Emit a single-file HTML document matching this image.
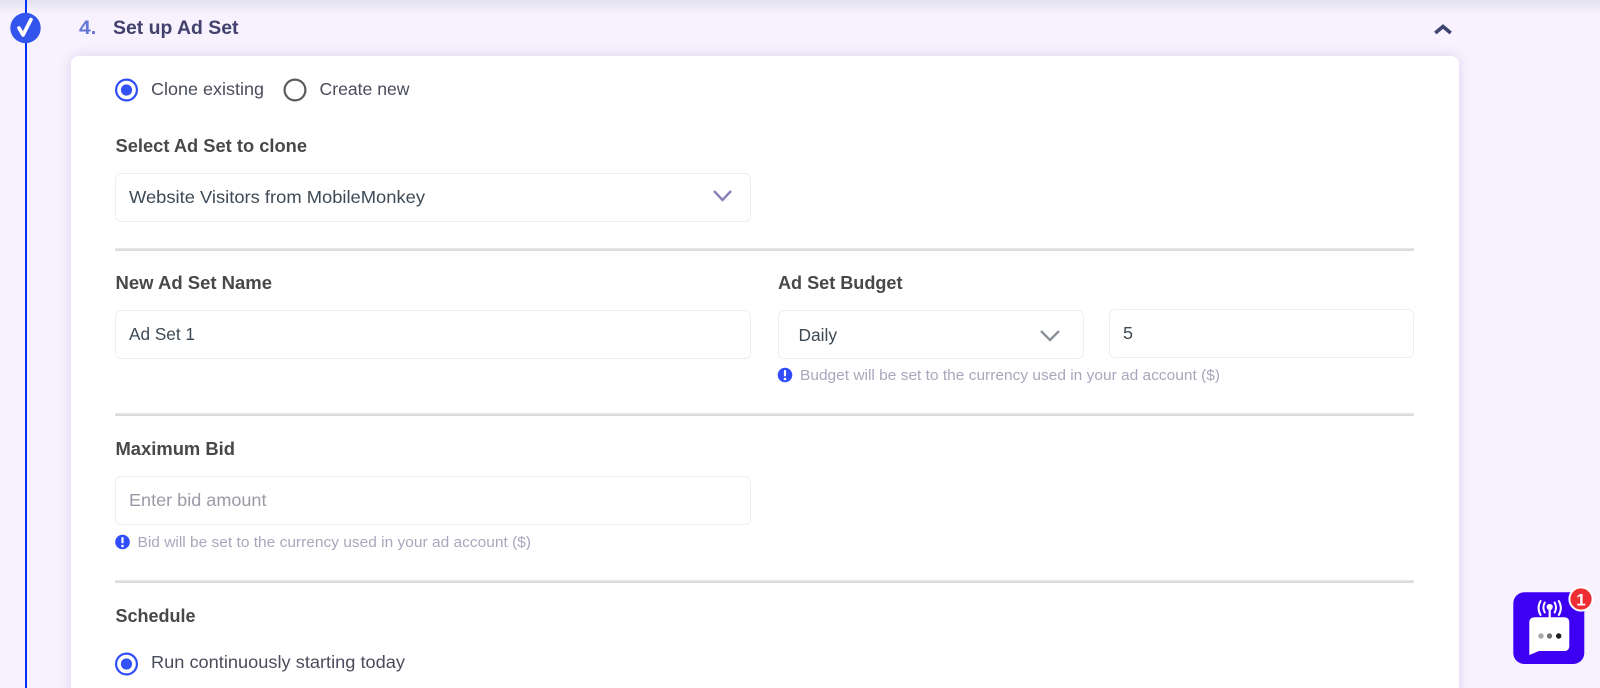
<!DOCTYPE html>
<html lang="en">
<head>
<meta charset="utf-8">
<title>Set up Ad Set</title>
<style>
html,body{margin:0;padding:0;width:1600px;height:688px;overflow:hidden;background:#f7f2fe}
body{position:relative;font-family:"Liberation Sans",sans-serif}
.abs{position:absolute}
.top{left:0;top:0;width:1600px;height:14px;background:linear-gradient(#e3e0ef,#f7f2fe)}
.card{left:71px;top:56px;width:1388px;height:660px;background:#fff;border-radius:8px;box-shadow:0 0 12px rgba(110,90,170,.2)}
.box{box-sizing:border-box;background:#fff;border:1px solid #eeedf3;border-radius:6px}
.div{left:115px;width:1299px;height:3px;background:linear-gradient(#e6e6e6,#d8d8d8);border-radius:1px}
.line{left:25px;top:0;width:2px;height:688px;background:#0033ff}
svg.t{position:absolute;left:0;top:0;width:1600px;height:688px}
text{font-family:"Liberation Sans",sans-serif}
.h{font-size:19.5px;font-weight:700;fill:#41416b}
.l{font-size:18.5px;font-weight:700;fill:#484848}
.v{font-size:17.5px;fill:#3d4a55}
.r{font-size:17.5px;fill:#4a4c5c}
.n{font-size:15px;fill:#a7a7bd}
</style>
</head>
<body>
<div class="abs top"></div>
<div class="abs card"></div>
<div class="abs line"></div>

<div class="abs box" style="left:115px;top:173px;width:636px;height:49px"></div>
<div class="abs div" style="top:248px"></div>
<div class="abs box" style="left:115px;top:310px;width:636px;height:49px"></div>
<div class="abs box" style="left:778px;top:310px;width:306px;height:49px"></div>
<div class="abs box" style="left:1109px;top:309px;width:305px;height:49px"></div>
<div class="abs div" style="top:413px"></div>
<div class="abs box" style="left:115px;top:476px;width:636px;height:49px"></div>
<div class="abs div" style="top:580px"></div>

<svg class="t" viewBox="0 0 1600 688" xmlns="http://www.w3.org/2000/svg">
  <!-- step check -->
  <circle cx="25.5" cy="28" r="15.2" fill="#3454ee"/>
  <path d="M19 28 L23 35 L31 19.5" fill="none" stroke="#fff" stroke-width="3.6" stroke-linecap="round" stroke-linejoin="round"/>

  <text x="79" y="34" class="h" style="fill:#6477d8" textLength="17.5" lengthAdjust="spacingAndGlyphs">4.</text>
  <text x="113" y="34" class="h" textLength="125.5" lengthAdjust="spacingAndGlyphs">Set up Ad Set</text>
  <path d="M1435.3 33 L1443 26.5 L1450.7 33" fill="none" stroke="#3f4470" stroke-width="3.6" stroke-linejoin="miter"/>

  <!-- radios -->
  <circle cx="126.5" cy="90" r="10.4" fill="#fff" stroke="#2f4dfa" stroke-width="2.2"/>
  <circle cx="126.5" cy="90" r="5.6" fill="#3552f5"/>
  <text x="151" y="95" class="r" textLength="113" lengthAdjust="spacingAndGlyphs">Clone existing</text>
  <circle cx="295" cy="90" r="10.4" fill="#fff" stroke="#5b5b5b" stroke-width="2.2"/>
  <text x="319.5" y="95" class="r" textLength="90" lengthAdjust="spacingAndGlyphs">Create new</text>

  <text x="115.5" y="152" class="l" textLength="191.5" lengthAdjust="spacingAndGlyphs">Select Ad Set to clone</text>
  <text x="129" y="203" class="v" textLength="296" lengthAdjust="spacingAndGlyphs">Website Visitors from MobileMonkey</text>
  <path d="M714 191 L722.5 200 L731 191" fill="none" stroke="#8a80b5" stroke-width="2.4"/>

  <text x="115.5" y="289" class="l" textLength="156.5" lengthAdjust="spacingAndGlyphs">New Ad Set Name</text>
  <text x="778" y="289" class="l" textLength="124.5" lengthAdjust="spacingAndGlyphs">Ad Set Budget</text>
  <text x="129" y="340" class="v" textLength="66" lengthAdjust="spacingAndGlyphs">Ad Set 1</text>
  <text x="798.5" y="341" class="v" textLength="38.5" lengthAdjust="spacingAndGlyphs">Daily</text>
  <path d="M1041 331 L1050 340 L1059 331" fill="none" stroke="#8b929c" stroke-width="2.4"/>
  <text x="1123" y="339" class="v" textLength="10" lengthAdjust="spacingAndGlyphs">5</text>

  <circle cx="785" cy="375" r="7.3" fill="#2f4dfa"/>
  <rect x="783.9" y="370" width="2.2" height="6.4" rx="1" fill="#fff"/>
  <circle cx="785" cy="379" r="1.3" fill="#fff"/>
  <text x="800" y="380" class="n" textLength="420" lengthAdjust="spacingAndGlyphs">Budget will be set to the currency used in your ad account ($)</text>

  <text x="115.5" y="455" class="l" textLength="119.5" lengthAdjust="spacingAndGlyphs">Maximum Bid</text>
  <text x="129" y="506" class="v" style="fill:#9a9aa6" textLength="137.5" lengthAdjust="spacingAndGlyphs">Enter bid amount</text>

  <circle cx="122.5" cy="542" r="7.3" fill="#2f4dfa"/>
  <rect x="121.4" y="537" width="2.2" height="6.4" rx="1" fill="#fff"/>
  <circle cx="122.5" cy="546" r="1.3" fill="#fff"/>
  <text x="137.5" y="547" class="n" textLength="393.5" lengthAdjust="spacingAndGlyphs">Bid will be set to the currency used in your ad account ($)</text>

  <text x="115.5" y="622" class="l" textLength="80" lengthAdjust="spacingAndGlyphs">Schedule</text>
  <circle cx="126.5" cy="664" r="10.4" fill="#fff" stroke="#2f4dfa" stroke-width="2.2"/>
  <circle cx="126.5" cy="664" r="5.6" fill="#3552f5"/>
  <text x="151" y="668" class="r" textLength="254" lengthAdjust="spacingAndGlyphs">Run continuously starting today</text>

  <!-- chat widget -->
  <rect x="1513.3" y="592.3" width="71" height="71.7" rx="11" fill="#3d00f2"/>
  <path d="M1535 617.3 H1564 Q1569.3 617.3 1569.3 622.6 V645.7 Q1569.3 651 1564 651 H1539 L1529.3 655 V622.6 Q1529.3 617.3 1535 617.3 Z" fill="#fff"/>
  <path d="M1549.7 607 V618" stroke="#fff" stroke-width="2.2"/>
  <circle cx="1549.7" cy="607" r="3.1" fill="#fff"/>
  <path d="M1544.8 602.5 Q1542 607.5 1544.8 612.5 M1554.6 602.5 Q1557.4 607.5 1554.6 612.5 M1540.6 601 Q1536.5 608 1540.6 615 M1558.8 601 Q1562.9 608 1558.8 615" fill="none" stroke="#fff" stroke-width="2" stroke-linecap="round"/>
  <circle cx="1541" cy="636" r="2.7" fill="#a8a8a8"/>
  <circle cx="1549.5" cy="636" r="2.7" fill="#737373"/>
  <circle cx="1558.7" cy="636" r="2.7" fill="#1c1c1c"/>
  <circle cx="1581" cy="599" r="11.6" fill="#ee2e34" stroke="#fff" stroke-width="2"/>
  <text x="1581" y="605.5" text-anchor="middle" style="font-size:17px;font-weight:700;fill:#fff">1</text>
</svg>
</body>
</html>
